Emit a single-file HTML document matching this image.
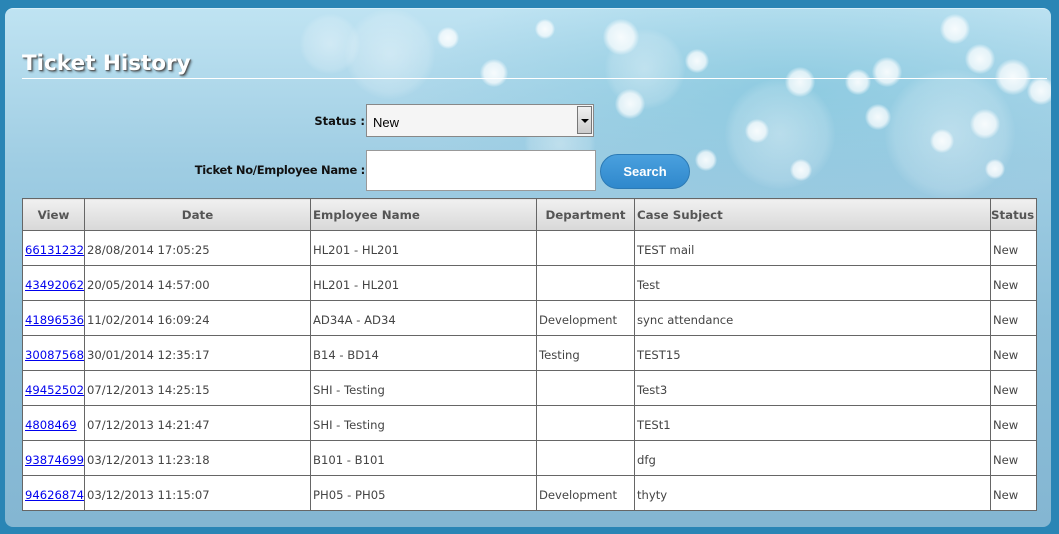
<!DOCTYPE html>
<html><head><meta charset="utf-8"><style>
*{margin:0;padding:0;box-sizing:border-box}
body{width:1059px;height:534px;overflow:hidden;background:#2a85b5;font-family:"DejaVu Sans","Liberation Sans",sans-serif;position:relative}
.panel{position:absolute;left:5px;top:8px;width:1046px;height:519px;border-radius:8px;background:linear-gradient(180deg,#bfe3f2 0%,#9fcde3 30%,#8cbfd9 60%,#84b6d2 100%);overflow:hidden;border-top:1px solid #d6eef8}
.b{position:absolute;border-radius:50%;background:radial-gradient(circle,rgba(255,255,255,.9) 0%,rgba(255,255,255,.7) 50%,rgba(255,255,255,0) 72%)}
.f{position:absolute;border-radius:50%;background:radial-gradient(circle,rgba(255,255,255,.35) 0%,rgba(255,255,255,.15) 60%,rgba(255,255,255,0) 72%)}
.bokeh{position:absolute;left:380px;top:0;width:680px;height:200px;background:radial-gradient(ellipse at 60% 40%,rgba(110,190,215,.5),rgba(110,190,215,0) 70%)}
h1{position:absolute;left:22px;top:51px;font-size:21.5px;font-weight:bold;color:#fff;text-shadow:1px 1px 1px #555,2px 2px 2px rgba(0,0,0,.4)}
.line{position:absolute;left:22px;top:78px;width:1025px;height:1px;background:#fff}
.lbl{position:absolute;right:694px;font-size:11.5px;font-weight:bold;color:#111;white-space:nowrap;text-align:right}
.sel{position:absolute;left:366px;top:104px;width:228px;height:33px;background:#f5f5f5;border:1px solid #888;font-size:13px;padding:10px 6px;font-family:"Liberation Sans",sans-serif}
.arr{position:absolute;right:1px;top:1px;width:15px;height:28px;background:linear-gradient(#f0f0f0,#ccc);border:1px solid #777}
.arr:after{content:"";position:absolute;left:3px;top:12px;border:4px solid transparent;border-top:4px solid #000}
.inp{position:absolute;left:366px;top:150px;width:230px;height:41px;background:#fff;border:1px solid #999}
.btn{position:absolute;left:600px;top:154px;width:90px;height:35px;border-radius:18px;background:linear-gradient(#4aa0de,#2f88cc);border:1px solid #2c7ab5;color:#fff;font-weight:bold;font-size:13px;text-align:center;line-height:33px;font-family:"Liberation Sans",sans-serif}
table{position:absolute;left:22px;top:198px;width:1014px;table-layout:fixed;border-collapse:collapse;background:#fff;font-size:11.6px;color:#444}
td,th{border:1px solid #666;height:35px;padding:0 2px;white-space:nowrap;overflow:hidden}
th{height:32px;background:linear-gradient(#f0f0f0,#d8d8d8);color:#555;font-weight:bold;font-size:11.8px}
td{color:#444;padding-top:3px}
a{color:#00e;text-decoration:underline}
</style></head><body>
<div class="panel">
<div class="bokeh"></div>
<div class="f" style="left:295px;top:5px;width:60px;height:60px"></div>
<div class="f" style="left:340px;top:0;width:90px;height:90px"></div>
<div class="f" style="left:600px;top:20px;width:80px;height:80px"></div>
<div class="f" style="left:720px;top:70px;width:110px;height:110px"></div>
<div class="f" style="left:880px;top:60px;width:130px;height:130px"></div>
<div class="f" style="left:520px;top:100px;width:70px;height:70px"></div>
<div class="b" style="left:432px;top:18px;width:22px;height:22px"></div>
<div class="b" style="left:475px;top:50px;width:28px;height:28px"></div>
<div class="b" style="left:530px;top:10px;width:20px;height:20px"></div>
<div class="b" style="left:598px;top:10px;width:36px;height:36px"></div>
<div class="b" style="left:610px;top:80px;width:30px;height:30px"></div>
<div class="b" style="left:680px;top:40px;width:24px;height:24px"></div>
<div class="b" style="left:780px;top:58px;width:30px;height:30px"></div>
<div class="b" style="left:840px;top:60px;width:26px;height:26px"></div>
<div class="b" style="left:867px;top:48px;width:30px;height:30px"></div>
<div class="b" style="left:860px;top:95px;width:26px;height:26px"></div>
<div class="b" style="left:935px;top:5px;width:30px;height:30px"></div>
<div class="b" style="left:960px;top:35px;width:30px;height:30px"></div>
<div class="b" style="left:990px;top:50px;width:36px;height:36px"></div>
<div class="b" style="left:1022px;top:68px;width:28px;height:28px"></div>
<div class="b" style="left:965px;top:100px;width:30px;height:30px"></div>
<div class="b" style="left:925px;top:120px;width:24px;height:24px"></div>
<div class="b" style="left:980px;top:150px;width:20px;height:20px"></div>
<div class="b" style="left:740px;top:110px;width:24px;height:24px"></div>
<div class="b" style="left:785px;top:150px;width:22px;height:22px"></div>
<div class="b" style="left:690px;top:140px;width:22px;height:22px"></div>
</div>
<h1>Ticket History</h1>
<div class="line"></div>
<div class="lbl" style="top:114px">Status :</div>
<div class="sel">New<div class="arr"></div></div>
<div class="lbl" style="top:163px;letter-spacing:-0.3px">Ticket No/Employee Name :</div>
<div class="inp"></div>
<div class="btn">Search</div>
<table>
<colgroup><col style="width:62px"><col style="width:226px"><col style="width:226px"><col style="width:98px"><col style="width:356px"><col style="width:46px"></colgroup>
<tr><th>View</th><th>Date</th><th style="text-align:left">Employee Name</th><th>Department</th><th style="text-align:left">Case Subject</th><th style="text-align:left;padding:0">Status</th></tr>
<tr><td><a>66131232</a></td><td>28/08/2014 17:05:25</td><td>HL201 - HL201</td><td></td><td>TEST mail</td><td>New</td></tr>
<tr><td><a>43492062</a></td><td>20/05/2014 14:57:00</td><td>HL201 - HL201</td><td></td><td>Test</td><td>New</td></tr>
<tr><td><a>41896536</a></td><td>11/02/2014 16:09:24</td><td>AD34A - AD34</td><td>Development</td><td>sync attendance</td><td>New</td></tr>
<tr><td><a>30087568</a></td><td>30/01/2014 12:35:17</td><td>B14 - BD14</td><td>Testing</td><td>TEST15</td><td>New</td></tr>
<tr><td><a>49452502</a></td><td>07/12/2013 14:25:15</td><td>SHI - Testing</td><td></td><td>Test3</td><td>New</td></tr>
<tr><td><a>4808469</a></td><td>07/12/2013 14:21:47</td><td>SHI - Testing</td><td></td><td>TESt1</td><td>New</td></tr>
<tr><td><a>93874699</a></td><td>03/12/2013 11:23:18</td><td>B101 - B101</td><td></td><td>dfg</td><td>New</td></tr>
<tr><td><a>94626874</a></td><td>03/12/2013 11:15:07</td><td>PH05 - PH05</td><td>Development</td><td>thyty</td><td>New</td></tr>
</table>
</body></html>
